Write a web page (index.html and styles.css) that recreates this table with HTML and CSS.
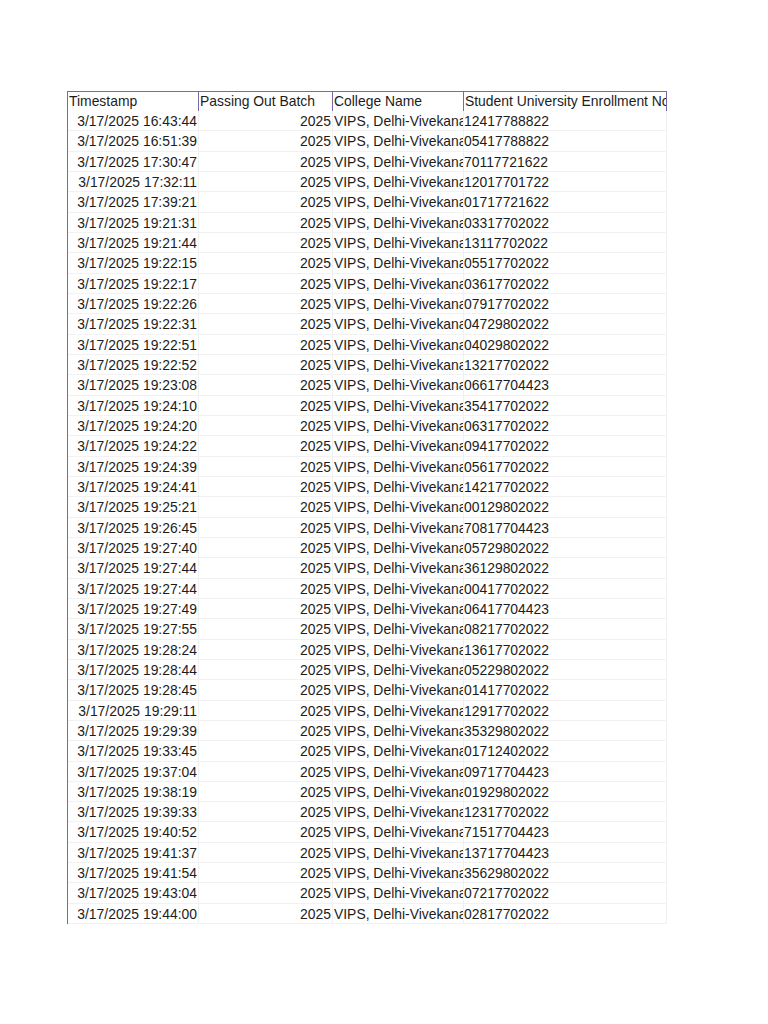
FILE: index.html
```html
<!DOCTYPE html>
<html lang="en">
<head>
    <meta charset="UTF-8">
    <title>Responses</title>
    <link rel="stylesheet" href="styles.css">
</head>
<body>
<div class="sheet">
    <div class="row head">
        <div class="cell">Timestamp</div>
        <div class="cell">Passing Out Batch</div>
        <div class="cell">College Name</div>
        <div class="cell">Student University Enrollment No.</div>
    </div>
    <div id="rows"></div>
</div>
<script>
    const stamps = [
        ['16:43:44', '12417788822'], ['16:51:39', '05417788822'], ['17:30:47', '70117721622'],
        ['17:32:11', '12017701722'], ['17:39:21', '01717721622'], ['19:21:31', '03317702022'],
        ['19:21:44', '13117702022'], ['19:22:15', '05517702022'], ['19:22:17', '03617702022'],
        ['19:22:26', '07917702022'], ['19:22:31', '04729802022'], ['19:22:51', '04029802022'],
        ['19:22:52', '13217702022'], ['19:23:08', '06617704423'], ['19:24:10', '35417702022'],
        ['19:24:20', '06317702022'], ['19:24:22', '09417702022'], ['19:24:39', '05617702022'],
        ['19:24:41', '14217702022'], ['19:25:21', '00129802022'], ['19:26:45', '70817704423'],
        ['19:27:40', '05729802022'], ['19:27:44', '36129802022'], ['19:27:44', '00417702022'],
        ['19:27:49', '06417704423'], ['19:27:55', '08217702022'], ['19:28:24', '13617702022'],
        ['19:28:44', '05229802022'], ['19:28:45', '01417702022'], ['19:29:11', '12917702022'],
        ['19:29:39', '35329802022'], ['19:33:45', '01712402022'], ['19:37:04', '09717704423'],
        ['19:38:19', '01929802022'], ['19:39:33', '12317702022'], ['19:40:52', '71517704423'],
        ['19:41:37', '13717704423'], ['19:41:54', '35629802022'], ['19:43:04', '07217702022'],
        ['19:44:00', '02817702022']
    ];

    const rows = document.querySelector('#rows');
    stamps.forEach(([time, enrol]) => {
        const row = document.createElement('div');
        row.className = 'row';
        row.innerHTML =
            `<div class="cell num">3/17/2025 ${time}</div>` +
            `<div class="cell num">2025</div>` +
            `<div class="cell">VIPS, Delhi-Vivekananda Institute of Professional Studies</div>` +
            `<div class="cell code">${enrol}</div>`;
        rows.appendChild(row);
    });
</script>
</body>
</html>
```

FILE: styles.css
```css
body {
    margin: 0;
    background: #fff;
    font-family: "Liberation Sans", Arial, sans-serif;
    font-size: 13.9px;
    color: #1c1c1c;
}

.sheet {
    padding: 91px 0 0 67px;
}

.row {
    display: grid;
    grid-template-columns: 131px 134px 131px 203px;
    height: 20.33px;
    border-left: 1px solid #7a68a8;
    box-sizing: border-box;
    width: 600px;
}

.cell {
    white-space: nowrap;
    overflow: hidden;
    padding: 0 1px;
    line-height: 21px;
    border-right: 1px solid #f0f0f0;
    border-bottom: 1px solid #f2f2f2;
}

.cell.num {
    text-align: right;
    padding: 0 1px 0 2px;
}

.cell.code {
    padding-left: 0;
}

/* header row */
.head {
    height: 20px;
    border-top: 1px solid #7a68a8;
}
.head .cell {
    line-height: 19px;
    padding: 0 1px 0 1px;
    border-right: 1px solid #7a68a8;
    border-bottom: none;
}
```
